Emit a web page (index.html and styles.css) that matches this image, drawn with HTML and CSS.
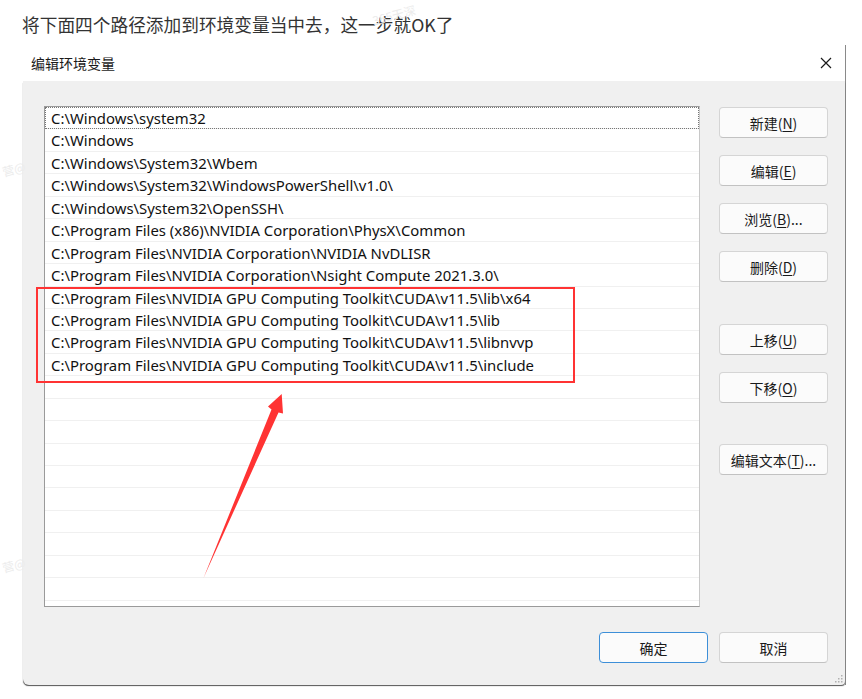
FILE: index.html
```html
<!DOCTYPE html>
<html lang="zh-CN">
<head>
    <meta charset="UTF-8">
    <meta name="viewport" content="width=device-width, initial-scale=1.0">
    <title>编辑环境变量</title>
    <link rel="stylesheet" href="styles.css">
</head>
<body>
    <p class="intro">将下面四个路径添加到环境变量当中去，这一步就OK了</p>

    <div class="dialog">
        <div class="titlebar">
            <span class="title">编辑环境变量</span>
            <button class="close" aria-label="关闭">
                <svg width="12" height="12" viewBox="0 0 12 12">
                    <path d="M1 1 L11 11 M11 1 L1 11" stroke="#1a1a1a" stroke-width="1.2" fill="none"/>
                </svg>
            </button>
        </div>

        <div class="dialog-body">
            <div class="main">
                <ul class="path-list">
                    <li class="focused">C:\Windows\system32</li>
                    <li>C:\Windows</li>
                    <li>C:\Windows\System32\Wbem</li>
                    <li>C:\Windows\System32\WindowsPowerShell\v1.0\</li>
                    <li>C:\Windows\System32\OpenSSH\</li>
                    <li>C:\Program Files (x86)\NVIDIA Corporation\PhysX\Common</li>
                    <li>C:\Program Files\NVIDIA Corporation\NVIDIA NvDLISR</li>
                    <li>C:\Program Files\NVIDIA Corporation\Nsight Compute 2021.3.0\</li>
                    <li>C:\Program Files\NVIDIA GPU Computing Toolkit\CUDA\v11.5\lib\x64</li>
                    <li>C:\Program Files\NVIDIA GPU Computing Toolkit\CUDA\v11.5\lib</li>
                    <li>C:\Program Files\NVIDIA GPU Computing Toolkit\CUDA\v11.5\libnvvp</li>
                    <li>C:\Program Files\NVIDIA GPU Computing Toolkit\CUDA\v11.5\include</li>
                    <li></li>
                    <li></li>
                    <li></li>
                    <li></li>
                    <li></li>
                    <li></li>
                    <li></li>
                    <li></li>
                    <li></li>
                    <li></li>
                    <li></li>
                </ul>

                <div class="side-buttons">
                    <button class="btn">新建(<u>N</u>)</button>
                    <button class="btn">编辑(<u>E</u>)</button>
                    <button class="btn">浏览(<u>B</u>)...</button>
                    <button class="btn">删除(<u>D</u>)</button>
                    <button class="btn group-start">上移(<u>U</u>)</button>
                    <button class="btn">下移(<u>O</u>)</button>
                    <button class="btn group-start">编辑文本(<u>T</u>)...</button>
                </div>
            </div>

            <div class="footer">
                <button class="btn btn-default">确定</button>
                <button class="btn">取消</button>
            </div>

            <svg class="grip" width="8" height="8" viewBox="0 0 8 8">
                <rect x="6" y="0" width="1.5" height="1.5" fill="#b0b0b0"/>
                <rect x="3" y="3" width="1.5" height="1.5" fill="#b0b0b0"/>
                <rect x="6" y="3" width="1.5" height="1.5" fill="#b0b0b0"/>
                <rect x="0" y="6" width="1.5" height="1.5" fill="#b0b0b0"/>
                <rect x="3" y="6" width="1.5" height="1.5" fill="#b0b0b0"/>
                <rect x="6" y="6" width="1.5" height="1.5" fill="#b0b0b0"/>
            </svg>
        </div>
    </div>

    <!-- annotations drawn over the screenshot -->
    <div class="highlight-box"></div>
    <svg class="arrow" width="862" height="699" viewBox="0 0 862 699">
        <polygon points="281.7,394 268,406.5 271.5,409.5 203.5,578 278.5,412.5 283,413.5" fill="#f33"/>
    </svg>

    <span class="watermark wm-top">365天深</span>
    <span class="watermark wm-left1">营@</span>
    <span class="watermark wm-left2">营@</span>
</body>
</html>
```

FILE: styles.css
```css
* {
    box-sizing: border-box;
}

body {
    margin: 0;
    background-color: white;
    font-family: "Noto Sans", "Noto Sans CJK SC", sans-serif;
    color: #1a1a1a;
    position: relative;
    width: 862px;
    height: 699px;
    overflow: hidden;
}

.intro {
    margin: 0;
    padding: 12px 0 0 22px;
    font-size: 17.7px;
    line-height: 24px;
    color: #333;
    font-family: "Noto Sans CJK SC", sans-serif;
}

.dialog {
    margin: 9px 0 0 23px;
    width: 823px;
    border-right: 1px solid #8a8a8a;
}

.titlebar {
    height: 36px;
    display: flex;
    align-items: center;
    justify-content: space-between;
    padding: 0 13px 0 8px;
    background-color: white;
}

.title {
    font-family: "Noto Sans CJK SC", sans-serif;
    font-size: 14px;
    color: #1a1a1a;
}

.close {
    border: none;
    background: none;
    padding: 0;
    width: 12px;
    height: 12px;
    display: flex;
}

.dialog-body {
    position: relative;
    height: 604px;
    background-color: #f0f0f0;
    padding: 25px 0 0 21px;
    border-bottom-left-radius: 6px;
    border-bottom-right-radius: 4px;
    box-shadow: 0 1.5px 1px -0.5px #555;
}

.main {
    display: grid;
    grid-template-columns: 656px 109px;
    column-gap: 19px;
    align-items: start;
}

.path-list {
    list-style: none;
    margin: 0;
    padding: 0;
    height: 501px;
    overflow: hidden;
    background-color: white;
    border: 1px solid #9a9a9a;
    border-right-color: #c8c8c8;
}

.path-list li {
    height: 22.45px;
    line-height: 23px;
    padding-left: 6px;
    font-size: 14.9px;
    color: #111;
    border-bottom: 1px solid #f0f0f0;
    white-space: nowrap;
}

.path-list li.focused {
    outline: 1px dotted #777;
    outline-offset: -1px;
}

.side-buttons {
    display: flex;
    flex-direction: column;
    gap: 17px;
    padding-top: 1px;
}

.btn {
    height: 31px;
    width: 109px;
    font-family: "Noto Sans CJK SC", sans-serif;
    font-size: 14px;
    color: #1a1a1a;
    background-color: #fbfbfb;
    border: 1px solid #d5d5d5;
    border-bottom-color: #c2c2c2;
    border-radius: 4px;
    padding: 0;
    cursor: pointer;
}

.btn u {
    text-underline-offset: 2px;
}

.side-buttons .group-start {
    margin-top: 25px;
}

.side-buttons .group-start:last-child {
    margin-top: 24px;
}

.footer {
    display: flex;
    justify-content: flex-end;
    gap: 11px;
    padding-right: 17px;
    margin-top: 25px;
}

.btn-default {
    border: 1px solid #3d8fd8;
    border-bottom-color: #3d8fd8;
}

.grip {
    position: absolute;
    right: 2px;
    bottom: 2px;
}

.highlight-box {
    position: absolute;
    left: 36px;
    top: 287px;
    width: 539px;
    height: 96px;
    border: 2.5px solid #f33;
}

.arrow {
    position: absolute;
    left: 0;
    top: 0;
    pointer-events: none;
}

.watermark {
    position: absolute;
    font-family: "Noto Sans CJK SC", sans-serif;
    color: #ececec;
    font-size: 12px;
    line-height: 14px;
    transform: rotate(-15deg);
}

.wm-top {
    left: 372px;
    top: 8px;
}

.wm-left1 {
    left: 2px;
    top: 162px;
}

.wm-left2 {
    left: 2px;
    top: 558px;
}
```
